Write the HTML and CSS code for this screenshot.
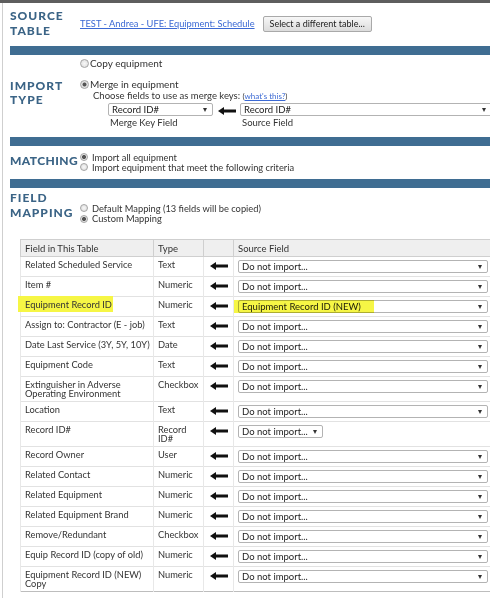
FILE: index.html
```html
<!DOCTYPE html>
<html lang="en">

<head>
  <meta charset="utf-8">
  <title>Import Equipment</title>
  <link rel="stylesheet" href="styles.css">
</head>

<body>
  <div class="topbar"></div>
  <div class="panel">

    <div class="section sec-source">
      <div class="sec-title">SOURCE<br>TABLE</div>
      <div class="sec-body source-row">
        <a class="table-link" href="#">TEST - Andrea - UFE: Equipment: Schedule</a>
        <button class="btn" type="button">Select a different table...</button>
      </div>
    </div>
    <div class="divider"></div>

    <div class="section sec-import">
      <div class="sec-title">IMPORT<br>TYPE</div>
      <div class="sec-body">
        <div class="opt opt-copy"><span class="radio"></span>Copy equipment</div>
        <div class="opt"><span class="radio on"></span>Merge in equipment</div>
        <div class="merge-keys">
          <div class="choose">Choose fields to use as merge keys: <span class="paren">(<a href="#">what's this?</a>)</span></div>
          <div class="key-row">
            <div class="key-col key-left">
              <div class="sel"><span>Record ID#</span></div>
              <div class="key-label">Merge Key Field</div>
            </div>
            <div class="key-arrow">
              <svg width="18" height="8" viewBox="0 0 18 8"><path d="M0 4 L6 0 L6 2.6 L18 2.6 L18 5.4 L6 5.4 L6 8 Z" fill="#111"/></svg>
            </div>
            <div class="key-col key-right">
              <div class="sel"><span>Record ID#</span></div>
              <div class="key-label">Source Field</div>
            </div>
          </div>
        </div>
      </div>
    </div>
    <div class="divider"></div>

    <div class="section sec-match">
      <div class="sec-title">MATCHING</div>
      <div class="sec-body">
        <div class="opt small"><span class="radio sm on"></span>Import all equipment</div>
        <div class="opt small"><span class="radio sm"></span>Import equipment that meet the following criteria</div>
      </div>
    </div>
    <div class="divider"></div>

    <div class="section sec-mapping">
      <div class="sec-title">FIELD<br>MAPPING</div>
      <div class="sec-body mapping-opts">
        <div class="opt small"><span class="radio sm"></span>Default Mapping (13 fields will be copied)</div>
        <div class="opt small"><span class="radio sm on"></span>Custom Mapping</div>
      </div>
    </div>

    <table class="map">
      <colgroup>
        <col class="c-field">
        <col class="c-type">
        <col class="c-arrow">
        <col class="c-src">
      </colgroup>
      <thead>
        <tr><th>Field in This Table</th><th>Type</th><th></th><th>Source Field</th></tr>
      </thead>
      <tbody id="rows"></tbody>
    </table>

  </div>

  <script>
    var fields = [
      ["Related Scheduled Service", "Text"],
      ["Item #", "Numeric"],
      ["Equipment Record ID", "Numeric", "Equipment Record ID (NEW)"],
      ["Assign to: Contractor (E - job)", "Text"],
      ["Date Last Service (3Y, 5Y, 10Y)", "Date"],
      ["Equipment Code", "Text"],
      ["Extinguisher in Adverse Operating Environment", "Checkbox"],
      ["Location", "Text"],
      ["Record ID#", "Record ID#", "", "short"],
      ["Record Owner", "User"],
      ["Related Contact", "Numeric"],
      ["Related Equipment", "Numeric"],
      ["Related Equipment Brand", "Numeric"],
      ["Remove/Redundant", "Checkbox"],
      ["Equip Record ID (copy of old)", "Numeric"],
      ["Equipment Record ID (NEW) Copy", "Numeric"]
    ];
    var arrow = '<svg width="18" height="8" viewBox="0 0 18 8"><path d="M0 4 L6 0 L6 2.6 L18 2.6 L18 5.4 L6 5.4 L6 8 Z" fill="#111"/></svg>';
    var html = "";
    for (var i = 0; i < fields.length; i++) {
      var f = fields[i];
      var picked = f[2];
      var name = picked ? '<span class="hl">' + f[0] + '</span>' : f[0];
      var selClass = f[3] == "short" ? "sel sel-short" : "sel";
      var mark = picked ? '<span class="mark"></span>' : '';
      html += '<tr><td class="f">' + name + '</td><td class="t">' + f[1] + '</td>' +
        '<td class="a">' + arrow + '</td>' +
        '<td class="s">' + mark + '<div class="' + selClass + '"><span>' + (picked || "Do not import...") + '</span></div></td></tr>';
    }
    document.getElementById("rows").innerHTML = html;
  </script>
</body>

</html>
```

FILE: styles.css
```css
body {
  margin: 0;
  width: 490px;
  height: 598px;
  overflow: hidden;
  font-family: 'Lato', 'Open Sans', sans-serif;
  font-size: 9.5px;
  color: #333;
  background-color: #fff;
}

.topbar {
  height: 3px;
  background-color: #5e5e5e;
}

.panel {
  margin-left: 2px;
  border-left: 1px solid #cfcfcf;
  height: 595px;
}

.section {
  display: flex;
  align-items: center;
}

.sec-title {
  width: 70px;
  padding-left: 7px;
  flex-shrink: 0;
  font-size: 12px;
  font-weight: 900;
  line-height: 14.5px;
  letter-spacing: 1px;
  color: #3b6486;
}

.sec-body {
  flex: 1;
}

.divider {
  height: 9px;
  margin-left: 7px;
  background-color: #3f6d92;
}

/* source table */
.sec-source {
  padding: 6px 0 8px;
}

.source-row {
  display: flex;
  align-items: center;
  gap: 8px;
}

.table-link {
  color: #3b69d4;
  font-size: 9.3px;
}

.btn {
  height: 16px;
  padding: 0 6px;
  font-family: 'Lato', 'Open Sans', sans-serif;
  font-size: 9px;
  color: #222;
  border: 1px solid #a9a9a9;
  border-radius: 2px;
  background: linear-gradient(#f7f7f7, #dcdcdc);
}

/* import type */
.sec-import {
  padding: 2px 0 8px;
}

.opt {
  display: flex;
  align-items: center;
  height: 12px;
  font-size: 10px;
  white-space: nowrap;
}

.opt-copy {
  margin-bottom: 9px;
}

.opt.small {
  height: 10.5px;
  font-size: 9.3px;
}

.radio {
  display: inline-block;
  flex-shrink: 0;
  box-sizing: border-box;
  width: 9px;
  height: 9px;
  margin-right: 1px;
  border: 1px solid #a5a5a5;
  border-radius: 50%;
  background: radial-gradient(circle, #f8f8f8, #d9d9d9);
}

.radio.on {
  background: radial-gradient(circle, #555 0, #555 1.6px, #e6e6e6 2.4px, #d4d4d4);
}

.radio.sm {
  width: 8px;
  height: 8px;
  margin-right: 4px;
}

.merge-keys {
  padding-left: 13px;
}

.choose {
  line-height: 12px;
  font-size: 9.5px;
}

.paren {
  font-size: 8px;
}

.paren a {
  color: #3b69d4;
}

.key-row {
  display: flex;
  margin-top: 1px;
  margin-left: 15px;
}

.key-left {
  width: 105px;
}

.key-right {
  flex: 1;
  margin-right: -2px;
}

.key-arrow {
  width: 27px;
  padding-top: 3px;
  text-align: center;
}

.key-label {
  line-height: 12px;
  padding-left: 2px;
  margin-top: 1px;
  font-size: 9.5px;
}

.sel {
  position: relative;
  box-sizing: border-box;
  height: 13px;
  padding-left: 3px;
  line-height: 11px;
  font-size: 9.5px;
  color: #222;
  background-color: #fff;
  border: 1px solid #b3b3b3;
  border-radius: 2px;
  white-space: nowrap;
}

.sel::after {
  content: "";
  position: absolute;
  right: 5px;
  top: 4px;
  border-top: 4px solid #333;
  border-left: 2.5px solid transparent;
  border-right: 2.5px solid transparent;
}

.sel-short {
  width: 85px;
}

/* matching */
.sec-match {
  padding: 6px 0 7px;
}

.sec-match .sec-title {
  margin-top: -2px;
  letter-spacing: 0.4px;
}

.sec-match .opt.small {
  height: 10px;
}

/* field mapping */
.sec-mapping {
  align-items: flex-start;
  padding-top: 3px;
}

.mapping-opts {
  padding-top: 12px;
}

/* mapping table */
.map {
  margin-top: 15px;
  margin-left: 17px;
  width: 472px;
  border-collapse: collapse;
  table-layout: fixed;
  border: 1px solid #bdbdbd;
}

.c-field { width: 133px; }
.c-type { width: 50px; }
.c-arrow { width: 30px; }
.c-src { width: 259px; }

.map th {
  height: 16px;
  padding: 0 4px;
  text-align: left;
  font-weight: normal;
  font-size: 9.5px;
  color: #333;
  background-color: #efefef;
  border: 1px solid #cfcfcf;
}

.map td {
  padding: 3px 0 3px 4px;
  vertical-align: top;
  line-height: 9px;
  font-size: 9.3px;
  border-top: 1px solid #e2e2e2;
  border-left: 1px solid #e8e8e8;
}

.map td.a {
  text-align: center;
  padding: 5px 0 0;
}

.map td.s {
  position: relative;
  padding-right: 4px;
}

.hl {
  margin-left: -7px;
  padding: 3px 1px 2px 7px;
  background-color: #f6f645;
}

.mark {
  position: absolute;
  left: 0;
  top: 3px;
  width: 140px;
  height: 13px;
  background-color: #f6f645;
  mix-blend-mode: multiply;
  z-index: 1;
}
```
